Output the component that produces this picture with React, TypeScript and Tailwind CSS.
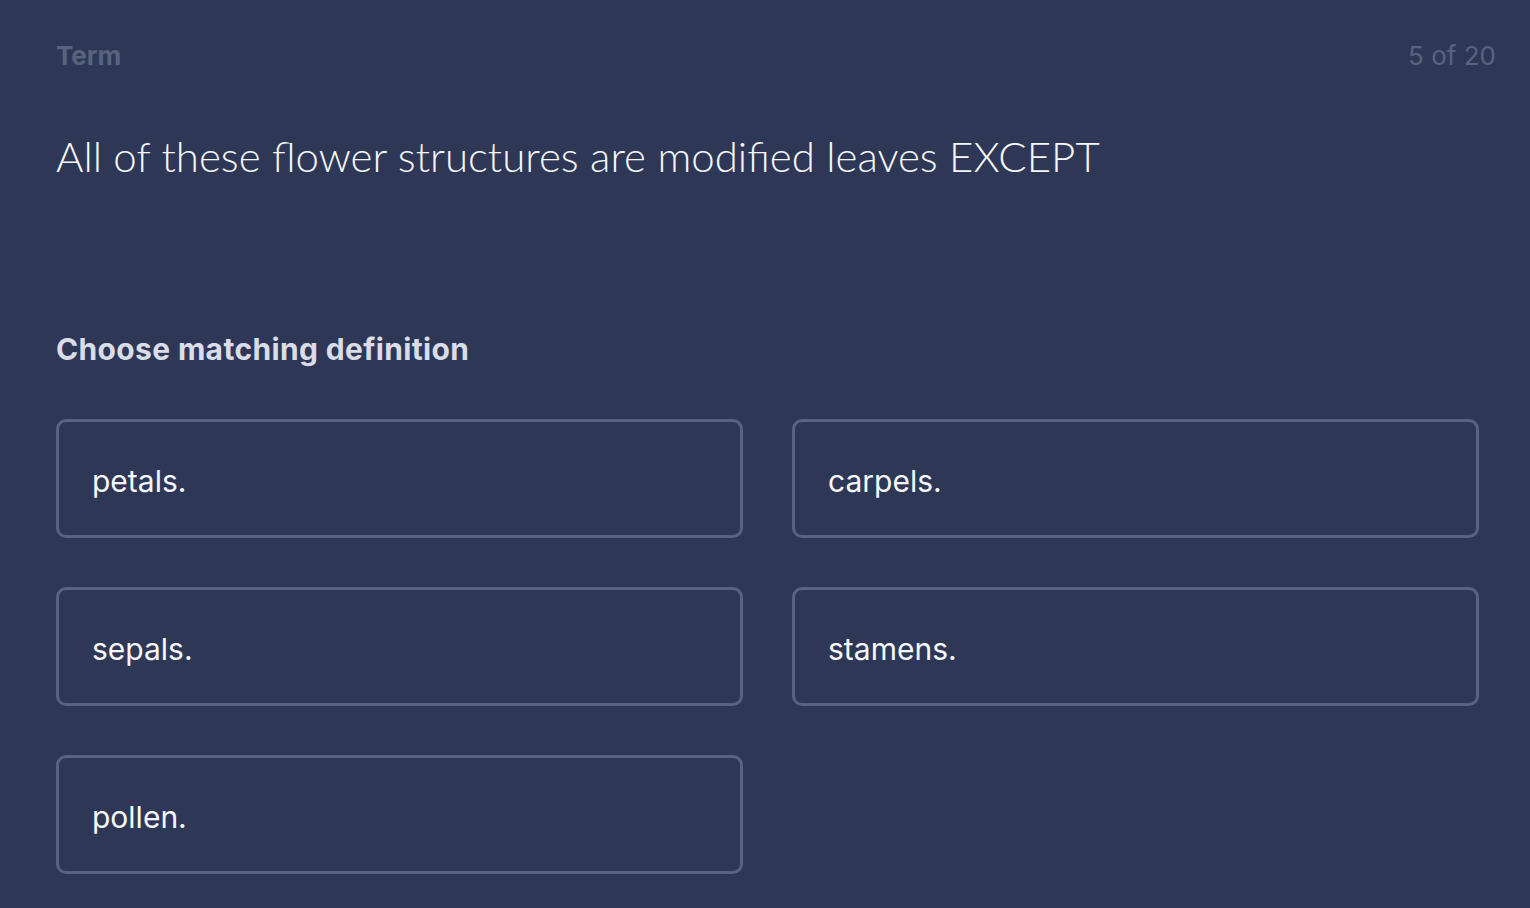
import React from 'react';

const options = ['petals.', 'carpels.', 'sepals.', 'stamens.', 'pollen.'];

export default function App() {
  return (
    <div
      className="min-h-screen w-full bg-[#2e3856] pl-14 pr-[34px] pt-[38px]"
      style={{ fontFamily: 'Inter, "Open Sans", sans-serif' }}
    >
      <div className="flex items-center justify-between">
        <span className="text-[26px] font-bold leading-[36px] text-[#586380]">Term</span>
        <span className="text-[26px] font-normal leading-[36px] text-[#586380]">5 of 20</span>
      </div>

      <h1
        className="mt-[56px] text-[42px] font-light leading-[52px] text-[#f6f7fb]"
        style={{ fontFamily: 'Lato, sans-serif' }}
      >
        All of these flower structures are modified leaves EXCEPT
      </h1>

      <h2 className="mt-[147px] text-[30px] font-bold leading-[40px] tracking-[0.35px] text-[#d9dde8]">
        Choose matching definition
      </h2>

      <div className="mt-[50px] grid w-[1423px] grid-cols-2 gap-x-[49px] gap-y-[49px]">
        {options.map((o) => (
          <button
            key={o}
            className="flex h-[119px] items-center rounded-[10px] border-[3px] border-[#586380] px-[33px] pt-[5px] text-left text-[30px] font-normal text-[#f6f7fb]"
          >
            {o}
          </button>
        ))}
      </div>
    </div>
  );
}
